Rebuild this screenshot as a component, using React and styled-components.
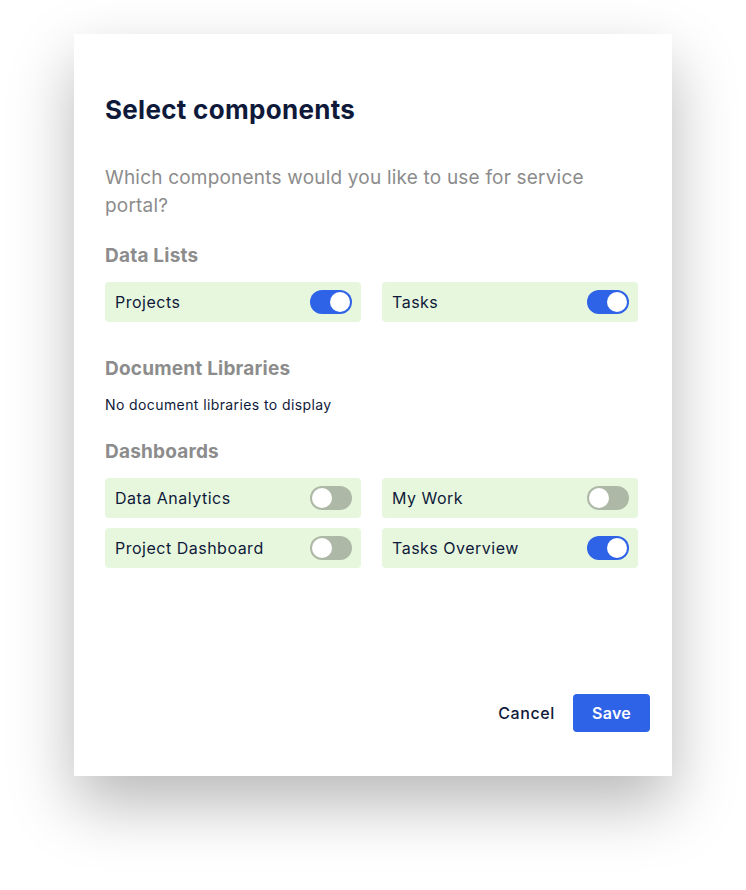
import React, { useState } from "react";
import styled, { createGlobalStyle } from "styled-components";

const GlobalStyle = createGlobalStyle`
  body {
    margin: 0;
    background: #ffffff;
    font-family: Inter, "Open Sans", sans-serif;
  }
`;

const Page = styled.div`
  display: flex;
  justify-content: center;
  padding: 34px 0 114px;
`;

const Card = styled.div`
  width: 598px;
  height: 742px;
  box-sizing: border-box;
  background: #ffffff;
  box-shadow: 0 28px 60px rgba(0, 0, 0, 0.28);
  padding: 61px 22px 44px 31px;
  display: flex;
  flex-direction: column;
`;

const Title = styled.h2`
  margin: 0;
  font-size: 26px;
  font-weight: 700;
  letter-spacing: 0.3px;
  color: #0f1a3a;
  line-height: 30px;
`;

const Intro = styled.p`
  margin: 39px 0 0;
  font-size: 19px;
  letter-spacing: 0.2px;
  line-height: 28px;
  color: #8c8c8c;
  padding-right: 10px;
`;

const SectionTitle = styled.h3`
  margin: ${(p) => p.$top}px 0 0;
  font-size: 19px;
  font-weight: 700;
  letter-spacing: 0.2px;
  color: #8c8c8c;
  line-height: 24px;
`;

const Empty = styled.p`
  margin: 14px 0 0;
  font-size: 14px;
  letter-spacing: 0.4px;
  color: #0f1a3a;
  line-height: 20px;
`;

const Grid = styled.div`
  margin-top: 14px;
  width: 533px;
  display: grid;
  grid-template-columns: 256px 256px;
  column-gap: 21px;
  row-gap: 10px;
`;

const Row = styled.div`
  height: 40px;
  box-sizing: border-box;
  background: #e7f7dd;
  border-radius: 4px;
  padding: 0 9px 0 10px;
  display: flex;
  align-items: center;
  justify-content: space-between;
  font-size: 16px;
  letter-spacing: 0.5px;
  color: #0f1a3a;
`;

const Track = styled.button`
  width: 42px;
  height: 24px;
  padding: 2px;
  border: none;
  border-radius: 12px;
  background: ${(p) => (p.$on ? "#2e63e8" : "#adb9a6")};
  display: flex;
  justify-content: ${(p) => (p.$on ? "flex-end" : "flex-start")};
  align-items: center;
  cursor: pointer;
  box-sizing: border-box;
`;

const Knob = styled.span`
  width: 20px;
  height: 20px;
  border-radius: 50%;
  background: #ffffff;
`;

const Footer = styled.div`
  margin-top: auto;
  display: flex;
  justify-content: flex-end;
  align-items: center;
  gap: 18px;
`;

const CancelButton = styled.button`
  border: none;
  background: none;
  font-family: inherit;
  font-size: 16px;
  font-weight: 500;
  letter-spacing: 0.6px;
  color: #0f1a3a;
  cursor: pointer;
  padding: 0;
`;

const SaveButton = styled.button`
  width: 77px;
  height: 38px;
  border: none;
  border-radius: 4px;
  background: #2e63e8;
  color: #ffffff;
  font-family: inherit;
  font-size: 16px;
  font-weight: 600;
  letter-spacing: 0.3px;
  cursor: pointer;
`;

function Toggle({ on, onClick }) {
  return (
    <Track $on={on} onClick={onClick}>
      <Knob />
    </Track>
  );
}

export default function App() {
  const [lists, setLists] = useState({ Projects: true, Tasks: true });
  const [boards, setBoards] = useState({
    "Data Analytics": false,
    "My Work": false,
    "Project Dashboard": false,
    "Tasks Overview": true,
  });

  return (
    <>
      <GlobalStyle />
      <Page>
        <Card>
          <Title>Select components</Title>
          <Intro>Which components would you like to use for service portal?</Intro>

          <SectionTitle $top={24}>Data Lists</SectionTitle>
          <Grid>
            {Object.keys(lists).map((name) => (
              <Row key={name}>
                {name}
                <Toggle
                  on={lists[name]}
                  onClick={() => setLists({ ...lists, [name]: !lists[name] })}
                />
              </Row>
            ))}
          </Grid>

          <SectionTitle $top={35}>Document Libraries</SectionTitle>
          <Empty>No document libraries to display</Empty>

          <SectionTitle $top={25}>Dashboards</SectionTitle>
          <Grid>
            {Object.keys(boards).map((name) => (
              <Row key={name}>
                {name}
                <Toggle
                  on={boards[name]}
                  onClick={() => setBoards({ ...boards, [name]: !boards[name] })}
                />
              </Row>
            ))}
          </Grid>

          <Footer>
            <CancelButton>Cancel</CancelButton>
            <SaveButton>Save</SaveButton>
          </Footer>
        </Card>
      </Page>
    </>
  );
}
